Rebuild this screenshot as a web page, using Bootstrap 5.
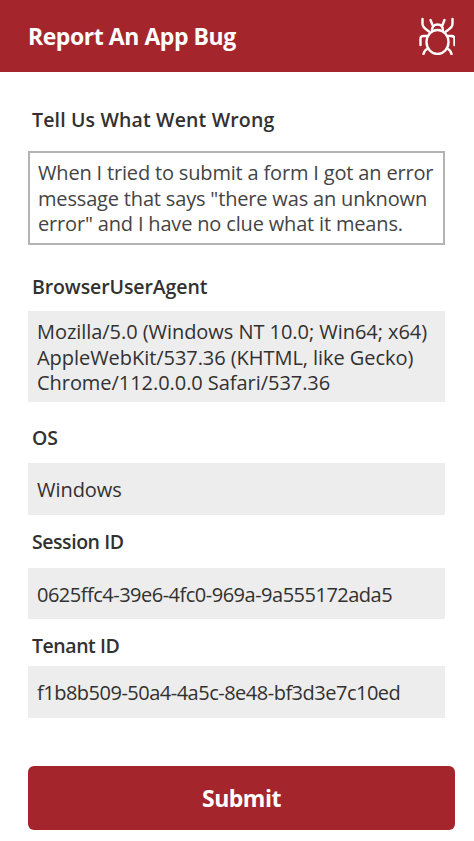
<!DOCTYPE html>
<html lang="en">
<head>
<meta charset="utf-8">
<title>Report An App Bug</title>
<link href="https://cdn.jsdelivr.net/npm/bootstrap@5.3.0/dist/css/bootstrap.min.css" rel="stylesheet">
<style>
html,body{height:841px;overflow:hidden;}
body{font-family:"Open Sans","Noto Sans",sans-serif;color:#323130;background:#fff;}
.bug-head{height:72px;background:#a4262c;padding:0 19px 0 28px;}
.bug-title{font-size:23px;font-weight:700;color:#fff;margin:0;line-height:1;letter-spacing:-.45px;}
.bug-main{padding:0 29px 0 28px;}
.field-label{font-size:19.5px;font-weight:600;color:#323130;margin:0;padding-left:4px;line-height:26px;letter-spacing:-.1px;}
.field-area.form-control{display:block;width:417px;height:94px;border:2px solid #b3b3b3;border-radius:0;padding:7px 2px 7px 8px;font-size:20px;line-height:25.5px;color:#444;resize:none;overflow:hidden;background:#fff;letter-spacing:-.17px;}
.field-value{background:#ededed;font-size:20px;line-height:25.5px;color:#323130;padding:2px 9px 0;width:417px;letter-spacing:-.05px;}
.id-text{letter-spacing:-.5px;}
.id-label{letter-spacing:-.45px;}
.submit-btn.btn{width:427px;height:64px;background:#a4262c;border:0;border-radius:6px;color:#fff;font-size:23px;font-weight:700;letter-spacing:-.5px;}
.l1{margin-top:35px;letter-spacing:.15px}.a1{margin-top:18px}
.l2{margin-top:29px}.v2{margin-top:11px;height:91px}
.l3{margin-top:23px}.v3{margin-top:12px;height:52px}
.l4{margin-top:14px}.v4{margin-top:13px;height:51px}
.l5{margin-top:14px}.v5{margin-top:7px;height:52px}
.submit-row{margin-top:48px}
</style>
</head>
<body>
<header class="bug-head d-flex align-items-center justify-content-between">
<h1 class="bug-title">Report An App Bug</h1>
<svg width="36" height="38" viewBox="0 0 36 38" fill="none" stroke="#fff" stroke-width="2.400" stroke-linecap="round" stroke-linejoin="round" aria-hidden="true">
<ellipse cx="18.500" cy="25" rx="11" ry="12"/>
<path d="M13 13.500C13 9.500 15 7.500 18.500 7.500S24 9.500 24 13.500"/>
<path d="M13.500 8 11.500 3M23.500 8l2-5"/>
<path d="M3.500 2v5c0 3.500 3 5 6.500 7.500M33.500 2v5c0 3.500-3 5-6.500 7.500"/>
<path d="M7.500 19H4.500C2.500 19 1.500 20 1.500 22v6M29.500 19h3c2 0 3 1 3 3v6"/>
<path d="M9 31.500C6.500 32.500 5 34.500 4.500 37M28 31.500c2.500 1 4 3 4.500 5.500"/>
</svg>
</header>
<main class="bug-main">
<form>
<p class="field-label l1">Tell Us What Went Wrong</p>
<textarea class="form-control field-area a1" readonly>When I tried to submit a form I got an error message that says "there was an unknown error" and I have no clue what it means.</textarea>
<p class="field-label l2">BrowserUserAgent</p>
<div class="field-value v2 d-flex align-items-center">Mozilla/5.0 (Windows NT 10.0; Win64; x64) AppleWebKit/537.36 (KHTML, like Gecko) Chrome/112.0.0.0 Safari/537.36</div>
<p class="field-label l3">OS</p>
<div class="field-value v3 d-flex align-items-center">Windows</div>
<p class="field-label id-label l4">Session ID</p>
<div class="field-value id-text v4 d-flex align-items-center">0625ffc4-39e6-4fc0-969a-9a555172ada5</div>
<p class="field-label id-label l5">Tenant ID</p>
<div class="field-value id-text v5 d-flex align-items-center">f1b8b509-50a4-4a5c-8e48-bf3d3e7c10ed</div>
<div class="submit-row"><button type="button" class="btn submit-btn">Submit</button></div>
</form>
</main>
<script src="https://cdn.jsdelivr.net/npm/bootstrap@5.3.0/dist/js/bootstrap.bundle.min.js"></script>
</body>
</html>
